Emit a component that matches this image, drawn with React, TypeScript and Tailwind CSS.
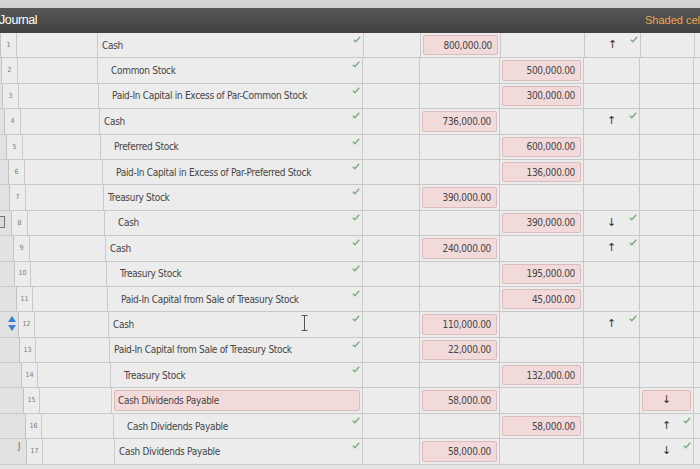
import React from 'react';

type Row = {
  acct: string;
  ind?: boolean;
  dr?: string;
  cr?: string;
  arrow?: string;
  col?: 'A' | 'B';
  chk2?: boolean;
  pinkAcct?: boolean;
  pinkArrow?: boolean;
};

const rows: Row[] = [
  { acct: 'Cash', dr: '800,000.00', arrow: '↑', col: 'A', chk2: true },
  { acct: 'Common Stock', ind: true, cr: '500,000.00' },
  { acct: 'Paid-In Capital in Excess of Par-Common Stock', ind: true, cr: '300,000.00' },
  { acct: 'Cash', dr: '736,000.00', arrow: '↑', col: 'A', chk2: true },
  { acct: 'Preferred Stock', ind: true, cr: '600,000.00' },
  { acct: 'Paid-In Capital in Excess of Par-Preferred Stock', ind: true, cr: '136,000.00' },
  { acct: 'Treasury Stock', dr: '390,000.00' },
  { acct: 'Cash', ind: true, cr: '390,000.00', arrow: '↓', col: 'A', chk2: true },
  { acct: 'Cash', dr: '240,000.00', arrow: '↑', col: 'A', chk2: true },
  { acct: 'Treasury Stock', ind: true, cr: '195,000.00' },
  { acct: 'Paid-In Capital from Sale of Treasury Stock', ind: true, cr: '45,000.00' },
  { acct: 'Cash', dr: '110,000.00', arrow: '↑', col: 'A', chk2: true },
  { acct: 'Paid-In Capital from Sale of Treasury Stock', dr: '22,000.00' },
  { acct: 'Treasury Stock', ind: true, cr: '132,000.00' },
  { acct: 'Cash Dividends Payable', pinkAcct: true, dr: '58,000.00', arrow: '↓', col: 'B', pinkArrow: true },
  { acct: 'Cash Dividends Payable', ind: true, cr: '58,000.00', arrow: '↑', col: 'B', chk2: true },
  { acct: 'Cash Dividends Payable', dr: '58,000.00', arrow: '↓', col: 'B', chk2: true },
];

const Check = () => (
  <svg width="8" height="7" viewBox="0 0 8 7" className="absolute top-[3px] right-[2px]">
    <path d="M0.8 3.8 L2.8 5.8 L7.2 0.8" fill="none" stroke="#79a879" strokeWidth="1.3" />
  </svg>
);

const Amount = ({ v }: { v: string }) => (
  <div className="absolute inset-[2px] rounded-[2px] bg-[#f2dada] border border-[#dbbcbc] flex items-center justify-end pr-[5px] text-[10px] tracking-[-0.3px] text-[#454545]">
    {v}
  </div>
);

const Arrow = ({ a }: { a: string }) => (
  <span className="text-[11px] text-[#333] font-['DejaVu_Sans',sans-serif]">{a}</span>
);

export default function App() {
  return (
    <div className="w-[700px] h-[469px] overflow-hidden bg-[#e4e4e4] font-['DejaVu_Sans_Condensed','Liberation_Sans',sans-serif]">
      <div className="h-[8px] bg-gradient-to-b from-[#d6d6d6] to-[#cfcfcf]" />
      <div className="h-[25px] bg-gradient-to-b from-[#575757] to-[#414141] flex items-center justify-between font-['Liberation_Sans',sans-serif]">
        <span className="text-[12.5px] text-white -ml-[1px] tracking-[-0.4px]">Journal</span>
        <span className="text-[11px] text-[#f0a64a] whitespace-nowrap">Shaded cel</span>
      </div>

      <div className="bg-[#ececec]">
        {rows.map((r, i) => {
          const gutter = Math.round(i * 1.7);
          const acctStart = Math.round(97 + i * 1.1);
          const blank = acctStart - gutter - 16;
          const acctW = 363 - acctStart;
          return (
            <div key={i} className="flex h-[25.4px] border-b border-[#c9c9c9]">
              <div style={{ width: gutter }} className="shrink-0 relative bg-[#e2e2e2] border-r border-[#c2c2c2]">
                {i === 7 && (
                  <div className="absolute left-0 top-[5px] w-[5px] h-[12px] border border-l-0 border-[#777] bg-[#dcdcdc]" />
                )}
                {i === 11 && (
                  <svg width="8" height="15" viewBox="0 0 8 15" className="absolute right-[2px] top-[4px]">
                    <path d="M4 0 L8 6 L0 6 Z" fill="#3b7fd4" />
                    <path d="M0 9 L8 9 L4 15 Z" fill="#3b7fd4" />
                  </svg>
                )}
                {i === 16 && (
                  <span className="absolute left-[18px] top-[1px] text-[9px] text-[#666]">J</span>
                )}
              </div>
              <div className="w-[16px] shrink-0 border-r border-[#c9c9c9] flex items-center justify-center text-[7px] text-[#7a7a7a]">
                {i + 1}
              </div>
              <div style={{ width: blank }} className="shrink-0 border-r border-[#c9c9c9]" />
              <div style={{ width: acctW }} className="shrink-0 relative border-r border-[#c9c9c9]">
                {r.pinkAcct ? (
                  <div className="absolute inset-[2px] rounded-[2px] bg-[#f2dada] border border-[#dbbcbc] flex items-center pl-[3px] text-[10px] tracking-[-0.3px] text-[#454545]">
                    {r.acct}
                  </div>
                ) : (
                  <>
                    <div className={`h-full flex items-center text-[10px] tracking-[-0.3px] text-[#454545] whitespace-nowrap ${r.ind ? 'pl-[13px]' : 'pl-[4px]'}`}>
                      {r.acct}
                    </div>
                    <Check />
                  </>
                )}
                {i === 11 && (
                  <svg width="7" height="16" viewBox="0 0 7 16" className="absolute left-[192px] top-[3px]">
                    <path d="M0.5 0.5 H6.5 M3.5 0.5 V15.5 M0.5 15.5 H6.5" stroke="#555" strokeWidth="1" fill="none" />
                  </svg>
                )}
              </div>
              <div className="w-[57px] shrink-0 border-r border-[#c9c9c9]" />
              <div className="w-[80px] shrink-0 relative border-r border-[#c9c9c9]">
                {r.dr && <Amount v={r.dr} />}
              </div>
              <div className="w-[84px] shrink-0 relative border-r border-[#c9c9c9]">
                {r.cr && <Amount v={r.cr} />}
              </div>
              <div className="w-[56px] shrink-0 relative border-r border-[#c9c9c9] flex items-center justify-center">
                {r.col === 'A' && r.arrow && <Arrow a={r.arrow} />}
                {r.col === 'A' && r.chk2 && <Check />}
              </div>
              <div className="w-[54px] shrink-0 relative border-r border-[#c9c9c9] flex items-center justify-center">
                {r.pinkArrow ? (
                  <div className="absolute inset-[2px] rounded-[2px] bg-[#f2dada] border border-[#dbbcbc] flex items-center justify-center">
                    <Arrow a={r.arrow!} />
                  </div>
                ) : (
                  r.col === 'B' && r.arrow && <Arrow a={r.arrow} />
                )}
                {r.col === 'B' && r.chk2 && <Check />}
              </div>
              <div className="flex-1" />
            </div>
          );
        })}
      </div>
    </div>
  );
}
